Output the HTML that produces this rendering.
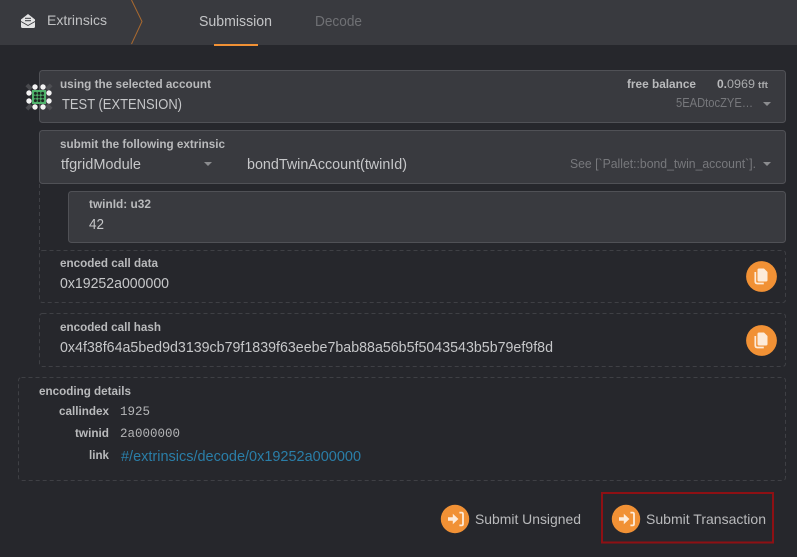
<!DOCTYPE html>
<html>
<head>
<meta charset="utf-8">
<style>
html,body{margin:0;padding:0;background:#26272c;width:797px;height:557px;overflow:hidden}
svg{display:block}
text{font-family:"Liberation Sans",sans-serif;white-space:pre}
.l{font-size:12px;font-weight:bold;fill:#b9babc}
.v{font-size:15px;fill:#c6c7c9}
.d{font-size:13px;fill:#77787c}
.m{font-family:"Liberation Mono",monospace;font-size:12.5px;fill:#b4b5b7}
.p{fill:#393a3f;stroke:#505156;stroke-width:1}
.x{fill:none;stroke:#3f4045;stroke-width:1;stroke-dasharray:4 3}
</style>
</head>
<body>
<svg width="797" height="557" viewBox="0 0 797 557" xmlns="http://www.w3.org/2000/svg">
<defs>
<g id="caret"><path d="M0 0h8l-4 4z" fill="#8b8c8f"/></g>
<g id="sub"><circle r="14.200" fill="#f19135"/><path d="M-7 -1.800h4.800v-3.400l5.600 5.200-5.600 5.200v-3.400h-4.800z" fill="#fdebd9"/><path d="M4.400 -6.400h2.200q1.400 0 1.400 1.400v10q0 1.400-1.400 1.400h-2.200" fill="none" stroke="#fdebd9" stroke-width="1.800"/></g>
<g id="copy"><circle r="15.400" fill="#f19135"/><path d="M-2.500 -8h5l3.500 3.500v8q0 1.500-1.500 1.500h-7q-1.500 0-1.500-1.500v-10q0-1.500 1.500-1.500z" fill="#fdebd9"/><path d="M-6.200 -4.500v9.500q0 2 2 2h6.500" fill="none" stroke="#fdebd9" stroke-width="1.700"/></g>
</defs>

<!-- header -->
<rect x="0" y="0" width="797" height="45" fill="#393a3f"/>
<rect x="214" y="44" width="44" height="2" fill="#f19135"/>
<path d="M131.500 0L142 21.500 131.500 44" fill="none" stroke="#a9692f" stroke-width="1"/>
<path d="M21 19.500L28 14 35 19.500V26.500Q35 28 33.500 28H22.500Q21 28 21 26.500Z" fill="#e4e4e5"/>
<rect x="25" y="17.800" width="6" height="1" fill="#393a3f"/>
<rect x="25" y="20.200" width="6" height="1" fill="#393a3f"/>
<path d="M21 21.500L28 25.500 35 21.500" fill="none" stroke="#393a3f" stroke-width=".8"/>
<text x="47" y="25" font-size="14" fill="#c0c1c3" textLength="60" lengthAdjust="spacingAndGlyphs">Extrinsics</text>
<text x="199" y="26" font-size="14.500" fill="#c4c5c7" textLength="73" lengthAdjust="spacingAndGlyphs">Submission</text>
<text x="315" y="26" font-size="14.500" fill="#6f7074" textLength="47" lengthAdjust="spacingAndGlyphs">Decode</text>

<!-- account panel -->
<rect class="p" x="39.500" y="70.500" width="746" height="52" rx="3"/>
<text class="l" x="60" y="88" textLength="151" lengthAdjust="spacingAndGlyphs">using the selected account</text>
<text class="v" x="62" y="109" textLength="120" lengthAdjust="spacingAndGlyphs">TEST (EXTENSION)</text>
<text class="l" x="627" y="88" textLength="69" lengthAdjust="spacingAndGlyphs">free balance</text>
<text class="l" x="717" y="88">0.</text>
<text x="727" y="88" font-size="12" fill="#a9aaac" textLength="28" lengthAdjust="spacingAndGlyphs">0969</text>
<text x="758" y="88" font-size="9.500" font-weight="bold" fill="#a9aaac" textLength="10" lengthAdjust="spacingAndGlyphs">tft</text>
<text class="d" x="676" y="107" textLength="77" lengthAdjust="spacingAndGlyphs">5EADtocZYE…</text>
<use href="#caret" x="763" y="102"/>

<!-- identicon -->
<g>
<g fill="#55565a" opacity=".75"><rect x="26" y="85" width="6" height="4" transform="rotate(45 29 87)"/><rect x="46" y="85" width="6" height="4" transform="rotate(-45 49 87)"/><rect x="26" y="105" width="6" height="4" transform="rotate(-45 29 107)"/><rect x="46" y="105" width="6" height="4" transform="rotate(45 49 107)"/></g>
<rect x="32" y="90" width="14" height="14" fill="#4fb26b"/>
<g fill="#1b2520"><circle cx="35.400" cy="93.400" r="1.500"/><circle cx="39" cy="93.400" r="1.500"/><circle cx="42.600" cy="93.400" r="1.500"/><circle cx="35.400" cy="97" r="1.500"/><circle cx="39" cy="97" r="1.500"/><circle cx="42.600" cy="97" r="1.500"/><circle cx="35.400" cy="100.600" r="1.500"/><circle cx="39" cy="100.600" r="1.500"/><circle cx="42.600" cy="100.600" r="1.500"/></g>
<g fill="#f2f2f2"><circle cx="35" cy="87" r="2.700"/><circle cx="43" cy="87" r="2.700"/><circle cx="35" cy="107" r="2.700"/><circle cx="43" cy="107" r="2.700"/><circle cx="29" cy="93" r="2.700"/><circle cx="29" cy="101" r="2.700"/><circle cx="49" cy="93" r="2.700"/><circle cx="49" cy="101" r="2.700"/></g>
</g>

<!-- extrinsic panel -->
<rect class="p" x="39.500" y="130.500" width="746" height="53" rx="3"/>
<text class="l" x="60" y="148" textLength="165" lengthAdjust="spacingAndGlyphs">submit the following extrinsic</text>
<text class="v" x="61" y="169" textLength="80" lengthAdjust="spacingAndGlyphs">tfgridModule</text>
<use href="#caret" x="204" y="162"/>
<text class="v" x="247" y="169" textLength="160" lengthAdjust="spacingAndGlyphs">bondTwinAccount(twinId)</text>
<text class="d" x="570" y="168" textLength="186" lengthAdjust="spacingAndGlyphs">See [`Pallet::bond_twin_account`].</text>
<use href="#caret" x="763" y="162"/>

<!-- param -->
<path class="x" d="M39.500 184V250"/>
<rect class="p" x="68.500" y="191.500" width="717" height="51" rx="3"/>
<text class="l" x="89" y="208" textLength="62" lengthAdjust="spacingAndGlyphs">twinId: u32</text>
<text class="v" x="89" y="229" textLength="15" lengthAdjust="spacingAndGlyphs">42</text>

<!-- encoded call data -->
<rect class="x" x="39.500" y="250.500" width="746" height="52" rx="3"/>
<text class="l" x="60" y="267" textLength="98" lengthAdjust="spacingAndGlyphs">encoded call data</text>
<text class="v" x="60" y="288" font-size="14.500" textLength="109" lengthAdjust="spacingAndGlyphs">0x19252a000000</text>
<use href="#copy" x="761.500" y="276.500"/>

<!-- encoded call hash -->
<rect class="x" x="39.500" y="313.500" width="746" height="53" rx="3"/>
<text class="l" x="60" y="331" textLength="101" lengthAdjust="spacingAndGlyphs">encoded call hash</text>
<text class="v" x="60" y="352" font-size="14.500" textLength="493" lengthAdjust="spacingAndGlyphs">0x4f38f64a5bed9d3139cb79f1839f63eebe7bab88a56b5f5043543b5b79ef9f8d</text>
<use href="#copy" x="761.500" y="340.500"/>

<!-- encoding details -->
<rect class="x" x="18.500" y="377.500" width="767" height="103" rx="3"/>
<text class="l" x="39" y="395" textLength="92" lengthAdjust="spacingAndGlyphs">encoding details</text>
<text class="l" x="59" y="415" textLength="50" lengthAdjust="spacingAndGlyphs">callindex</text>
<text class="m" x="120" y="415" textLength="30" lengthAdjust="spacingAndGlyphs">1925</text>
<text class="l" x="75" y="437" textLength="34" lengthAdjust="spacingAndGlyphs">twinid</text>
<text class="m" x="120" y="437" textLength="60" lengthAdjust="spacingAndGlyphs">2a000000</text>
<text class="l" x="89" y="459" textLength="20" lengthAdjust="spacingAndGlyphs">link</text>
<text x="121" y="461" font-size="14.500" fill="#2a7ea8" textLength="240" lengthAdjust="spacingAndGlyphs">#/extrinsics/decode/0x19252a000000</text>

<!-- buttons -->
<use href="#sub" x="455" y="519"/>
<text x="475" y="524" font-size="14" fill="#b9babc" textLength="106" lengthAdjust="spacingAndGlyphs">Submit Unsigned</text>
<rect x="602" y="493" width="171" height="49.500" fill="none" stroke="#8e1014" stroke-width="2"/>
<use href="#sub" x="626" y="519"/>
<text x="646" y="524" font-size="14" fill="#b9babc" textLength="120" lengthAdjust="spacingAndGlyphs">Submit Transaction</text>
</svg>
</body>
</html>
